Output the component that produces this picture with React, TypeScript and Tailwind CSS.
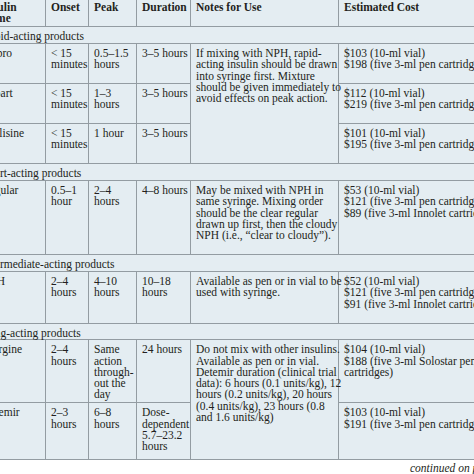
import { Fragment } from 'react'

type Row = {
  name: string
  onset: string[]
  peak: string[]
  duration: string[]
  cost: string[]
  h: string
  notes?: { lines: string[]; span: number }
}

type Section = { title: string; h: string; rows: Row[] }

const sections: Section[] = [
  {
    title: 'Rapid-acting products',
    h: 'h-[17px]',
    rows: [
      {
        name: 'Lispro',
        onset: ['< 15', 'minutes'],
        peak: ['0.5–1.5', 'hours'],
        duration: ['3–5 hours'],
        cost: ['$103 (10-ml vial)', '$198 (five 3-ml pen cartridges)'],
        h: 'h-[40px]',
        notes: {
          span: 3,
          lines: [
            'If mixing with NPH, rapid-',
            'acting insulin should be drawn',
            'into syringe first. Mixture',
            'should be given immediately to',
            'avoid effects on peak action.',
          ],
        },
      },
      {
        name: 'Aspart',
        onset: ['< 15', 'minutes'],
        peak: ['1–3', 'hours'],
        duration: ['3–5 hours'],
        cost: ['$112 (10-ml vial)', '$219 (five 3-ml pen cartridges)'],
        h: 'h-[40px]',
      },
      {
        name: 'Glulisine',
        onset: ['< 15', 'minutes'],
        peak: ['1 hour'],
        duration: ['3–5 hours'],
        cost: ['$101 (10-ml vial)', '$195 (five 3-ml pen cartridges)'],
        h: 'h-[40px]',
      },
    ],
  },
  {
    title: 'Short-acting products',
    h: 'h-[17px]',
    rows: [
      {
        name: 'Regular',
        onset: ['0.5–1', 'hour'],
        peak: ['2–4', 'hours'],
        duration: ['4–8 hours'],
        cost: ['$53 (10-ml vial)', '$121 (five 3-ml pen cartridges)', '$89 (five 3-ml Innolet cartridges)'],
        h: 'h-[74px]',
        notes: {
          span: 1,
          lines: [
            'May be mixed with NPH in',
            'same syringe. Mixing order',
            'should be the clear regular',
            'drawn up first, then the cloudy',
            'NPH (i.e., “clear to cloudy”).',
          ],
        },
      },
    ],
  },
  {
    title: 'Intermediate-acting products',
    h: 'h-[17px]',
    rows: [
      {
        name: 'NPH',
        onset: ['2–4', 'hours'],
        peak: ['4–10', 'hours'],
        duration: ['10–18', 'hours'],
        cost: ['$52 (10-ml vial)', '$121 (five 3-ml pen cartridges)', '$91 (five 3-ml Innolet cartridges)'],
        h: 'h-[52px]',
        notes: {
          span: 1,
          lines: ['Available as pen or in vial to be', 'used with syringe.'],
        },
      },
    ],
  },
  {
    title: 'Long-acting products',
    h: 'h-[16px]',
    rows: [
      {
        name: 'Glargine',
        onset: ['2–4', 'hours'],
        peak: ['Same', 'action', 'through-', 'out the', 'day'],
        duration: ['24 hours'],
        cost: ['$104 (10-ml vial)', '$188 (five 3-ml Solostar pen', 'cartridges)'],
        h: 'h-[63px]',
        notes: {
          span: 2,
          lines: [
            'Do not mix with other insulins.',
            'Available as pen or in vial.',
            'Detemir duration (clinical trial',
            'data): 6 hours (0.1 units/kg), 12',
            'hours (0.2 units/kg), 20 hours',
            '(0.4 units/kg), 23 hours (0.8',
            'and 1.6 units/kg)',
          ],
        },
      },
      {
        name: 'Detemir',
        onset: ['2–3', 'hours'],
        peak: ['6–8', 'hours'],
        duration: ['Dose-', 'dependent', '5.7–23.2', 'hours'],
        cost: ['$103 (10-ml vial)', '$191 (five 3-ml pen cartridges)'],
        h: 'h-[57px]',
      },
    ],
  },
]

const cell = 'border border-[#939ca2] align-top px-[5px] pt-[4px] pb-0 text-left font-normal'

function Lines({ lines }: { lines: string[] }) {
  return (
    <>
      {lines.map((l, i) => (
        <div key={i} className="whitespace-nowrap">{l}</div>
      ))}
    </>
  )
}

export default function App() {
  return (
    <div
      className="w-[474px] h-[474px] overflow-hidden bg-white text-[#231f20] text-[11.5px] leading-[11.3px]"
      style={{ fontFamily: '"Liberation Serif", "Times New Roman", serif' }}
    >
      <table className="table-fixed border-collapse bg-[#e4edf2] w-[532px] ml-[-24px] mt-[-3px]">
        <colgroup>
          <col className="w-[69px]" />
          <col className="w-[43px]" />
          <col className="w-[48px]" />
          <col className="w-[54px]" />
          <col className="w-[148px]" />
          <col className="w-[170px]" />
        </colgroup>
        <thead>
          <tr className="h-[29px]">
            <th className={cell + ' !font-bold'}>Insulin<br />Name</th>
            <th className={cell + ' !font-bold'}>Onset</th>
            <th className={cell + ' !font-bold'}>Peak</th>
            <th className={cell + ' !font-bold'}>Duration</th>
            <th className={cell + ' !font-bold'}>Notes for Use</th>
            <th className={cell + ' !font-bold'}>Estimated Cost</th>
          </tr>
        </thead>
        <tbody>
          {sections.map((s) => (
            <Fragment key={s.title}>
              <tr className={s.h}>
                <td colSpan={6} className={cell + ' font-bold pt-[3px]'}>{s.title}</td>
              </tr>
              {s.rows.map((r) => (
                <tr key={r.name} className={r.h}>
                  <td className={cell}>{r.name}</td>
                  <td className={cell}><Lines lines={r.onset} /></td>
                  <td className={cell}><Lines lines={r.peak} /></td>
                  <td className={cell}><Lines lines={r.duration} /></td>
                  {r.notes && (
                    <td rowSpan={r.notes.span} className={cell}><Lines lines={r.notes.lines} /></td>
                  )}
                  <td className={cell}><Lines lines={r.cost} /></td>
                </tr>
              ))}
            </Fragment>
          ))}
        </tbody>
      </table>
      <div className="pl-[410px] mt-[3px] whitespace-nowrap italic">continued on page 86</div>
    </div>
  )
}
